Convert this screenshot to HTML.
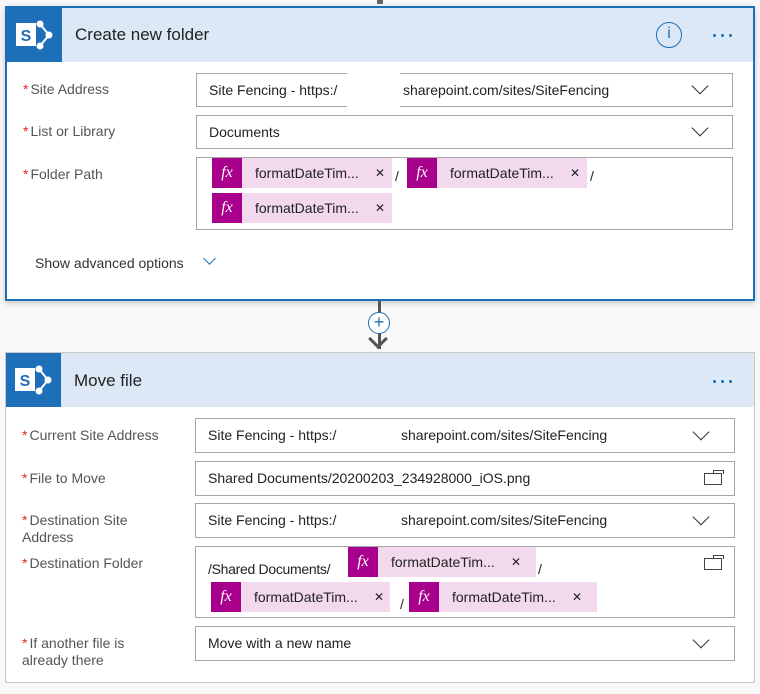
<!DOCTYPE html>
<html><head><style>
*{margin:0;padding:0;box-sizing:border-box}
body{width:760px;height:694px;background:#f8f8f8;font-family:"Segoe UI","Liberation Sans",sans-serif;position:relative;overflow:hidden;color:#222}
.a{position:absolute}
.card{position:absolute;background:#fff}
.hdr{position:absolute;background:#dce8f5}
.logo{position:absolute;background:#1c6fb8}
.title{position:absolute;font-size:17px;color:#222}
.lbl{position:absolute;font-size:14px;color:#555;line-height:17px}
.lbl b{color:#e0262a;font-weight:normal;margin-right:2px}
.box{position:absolute;border:1px solid #a6a6a6;background:#fff;font-size:14px;color:#222}
.box .t{position:absolute;left:12px;top:8px;white-space:nowrap}
.box .s{position:absolute;top:8px;white-space:nowrap}
.chev{position:absolute;width:12px;height:12px;border-right:1.5px solid #333;border-bottom:1.5px solid #333;transform:rotate(45deg)}
.tok{position:absolute;height:30px;width:180px;background:#f2d9ed;font-size:14px}
.tok .fx{position:absolute;left:0;top:0;width:30px;height:30px;background:#a8008c;color:#fff;font-family:"Liberation Serif",serif;font-style:italic;font-size:16px;text-align:center;line-height:29px}
.tok .n{position:absolute;left:43px;top:7px}
.tok .x{position:absolute;left:163px;top:8px;font-size:12px}
.sl{position:absolute;font-size:14px}
.dots{position:absolute;display:flex;gap:5px}
.dots i{width:3px;height:3px;border-radius:50%;background:#1c6fb8;display:block}
.fold{position:absolute;width:18px;height:12px;border:1px solid #444}
.fold:before{content:"";position:absolute;left:8px;top:-4px;width:9px;height:3px;border:1px solid #444;border-bottom:none}
</style></head><body>

<div class="a" style="left:377px;top:0;width:6px;height:4px;background:#666"></div>

<!-- Card 1 -->
<div class="card" style="left:5px;top:6px;width:750px;height:295px;border:2px solid #1c6fb8;box-shadow:0 2px 6px rgba(0,0,0,.2)"></div>
<div class="hdr" style="left:7px;top:8px;width:746px;height:54px"></div>
<div class="logo" style="left:7px;top:8px;width:55px;height:54px"></div>
<svg class="a" style="left:16px;top:19px" width="38" height="32" viewBox="0 0 38 32"><circle cx="24" cy="5" r="3.5" fill="#fff"/><circle cx="33" cy="16" r="3.5" fill="#fff"/><circle cx="24" cy="27" r="3.5" fill="#fff"/><path d="M24 5L33 16L24 27" stroke="#fff" stroke-width="2" fill="none"/><rect x="0" y="4" width="20" height="23" fill="#fff"/><text x="10" y="22" font-size="16" font-weight="bold" fill="#1c6fb8" text-anchor="middle" font-family="Liberation Sans">S</text></svg>
<div class="title" style="left:75px;top:25px">Create new folder</div>
<div class="a" style="left:656px;top:22px;width:26px;height:26px;border:1.5px solid #1c6fb8;border-radius:50%;color:#1c6fb8;font-size:16px;text-align:center;line-height:22px">i</div>
<div class="dots" style="left:713px;top:34px"><i></i><i></i><i></i></div>

<div class="lbl" style="left:23px;top:81px"><b>*</b>Site Address</div>
<div class="box" style="left:196px;top:73px;width:537px;height:34px"><span class="t">Site Fencing - https:/</span><span class="s" style="left:206px">sharepoint.com/sites/SiteFencing</span><div class="chev" style="left:497px;top:6px"></div></div>
<div class="a" style="left:347px;top:72px;width:53px;height:40px;background:#fff"></div>
<div class="lbl" style="left:23px;top:123px"><b>*</b>List or Library</div>
<div class="box" style="left:196px;top:115px;width:537px;height:34px"><span class="t">Documents</span><div class="chev" style="left:497px;top:6px"></div></div>
<div class="lbl" style="left:23px;top:166px"><b>*</b>Folder Path</div>
<div class="box" style="left:196px;top:157px;width:537px;height:73px"></div>
<div class="tok" style="left:212px;top:158px"><div class="fx">fx</div><span class="n">formatDateTim...</span><span class="x">✕</span></div>
<div class="sl" style="left:395px;top:168px">/</div>
<div class="tok" style="left:407px;top:158px"><div class="fx">fx</div><span class="n">formatDateTim...</span><span class="x">✕</span></div>
<div class="sl" style="left:590px;top:168px">/</div>
<div class="tok" style="left:212px;top:193px"><div class="fx">fx</div><span class="n">formatDateTim...</span><span class="x">✕</span></div>
<div class="a" style="left:35px;top:255px;font-size:14px;color:#333">Show advanced options</div>
<div class="chev" style="left:205px;top:254px;width:9px;height:9px;border-color:#1c6fb8;border-width:1px"></div>

<!-- connector -->
<div class="a" style="left:378px;top:301px;width:3px;height:48px;background:#555"></div>
<div class="a" style="left:368px;top:312px;width:22px;height:22px;border:1.5px solid #1c6fb8;border-radius:50%;background:#fff;color:#1c6fb8;text-align:center;line-height:18px;font-size:18px">+</div>
<div class="chev" style="left:371px;top:332px;width:14px;height:14px;border-color:#555;border-width:3px"></div>

<!-- Card 2 -->
<div class="card" style="left:5px;top:352px;width:750px;height:331px;border:1px solid #c8c8c8"></div>
<div class="hdr" style="left:6px;top:353px;width:748px;height:54px"></div>
<div class="logo" style="left:6px;top:353px;width:55px;height:54px"></div>
<svg class="a" style="left:15px;top:364px" width="38" height="32" viewBox="0 0 38 32"><circle cx="24" cy="5" r="3.5" fill="#fff"/><circle cx="33" cy="16" r="3.5" fill="#fff"/><circle cx="24" cy="27" r="3.5" fill="#fff"/><path d="M24 5L33 16L24 27" stroke="#fff" stroke-width="2" fill="none"/><rect x="0" y="4" width="20" height="23" fill="#fff"/><text x="10" y="22" font-size="16" font-weight="bold" fill="#1c6fb8" text-anchor="middle" font-family="Liberation Sans">S</text></svg>
<div class="title" style="left:74px;top:371px">Move file</div>
<div class="dots" style="left:713px;top:380px"><i></i><i></i><i></i></div>

<div class="lbl" style="left:22px;top:427px"><b>*</b>Current Site Address</div>
<div class="box" style="left:195px;top:418px;width:540px;height:35px"><span class="t">Site Fencing - https:/</span><span class="s" style="left:205px">sharepoint.com/sites/SiteFencing</span><div class="chev" style="left:499px;top:7px"></div></div>
<div class="lbl" style="left:22px;top:470px"><b>*</b>File to Move</div>
<div class="box" style="left:195px;top:461px;width:540px;height:35px"><span class="t">Shared Documents/20200203_234928000_iOS.png</span><div class="fold" style="left:508px;top:11px"></div></div>
<div class="lbl" style="left:22px;top:512px"><b>*</b>Destination Site<br>Address</div>
<div class="box" style="left:195px;top:503px;width:540px;height:35px"><span class="t">Site Fencing - https:/</span><span class="s" style="left:205px">sharepoint.com/sites/SiteFencing</span><div class="chev" style="left:499px;top:7px"></div></div>
<div class="a" style="left:347px;top:418px;width:52px;height:35px;background:#fff;border-top:1px solid #a6a6a6;border-bottom:1px solid #a6a6a6"></div>
<div class="a" style="left:347px;top:503px;width:52px;height:35px;background:#fff;border-top:1px solid #a6a6a6;border-bottom:1px solid #a6a6a6"></div>
<div class="lbl" style="left:22px;top:555px"><b>*</b>Destination Folder</div>
<div class="box" style="left:195px;top:546px;width:540px;height:72px"><span class="t" style="top:14px;letter-spacing:-0.3px">/Shared Documents/</span><div class="fold" style="left:508px;top:11px"></div></div>
<div class="tok" style="left:348px;top:547px;width:188px"><div class="fx">fx</div><span class="n">formatDateTim...</span><span class="x">✕</span></div>
<div class="sl" style="left:538px;top:561px">/</div>
<div class="tok" style="left:211px;top:582px;width:179px"><div class="fx">fx</div><span class="n">formatDateTim...</span><span class="x">✕</span></div>
<div class="sl" style="left:400px;top:596px">/</div>
<div class="tok" style="left:409px;top:582px;width:188px"><div class="fx">fx</div><span class="n">formatDateTim...</span><span class="x">✕</span></div>
<div class="lbl" style="left:22px;top:635px"><b>*</b>If another file is<br>already there</div>
<div class="box" style="left:195px;top:626px;width:540px;height:35px"><span class="t">Move with a new name</span><div class="chev" style="left:499px;top:7px"></div></div>
</body></html>
